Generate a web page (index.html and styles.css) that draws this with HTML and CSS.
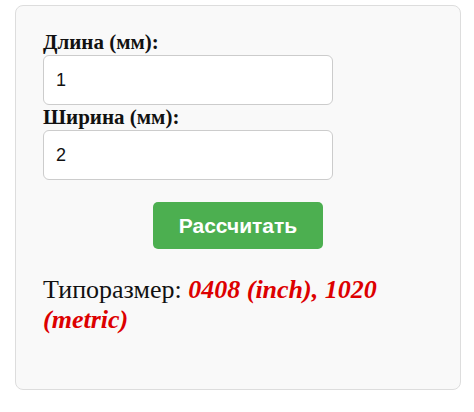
FILE: index.html
```html
<!DOCTYPE html>
<html lang="ru">
<head>
  <meta charset="UTF-8" />
  <meta name="viewport" content="width=device-width, initial-scale=1.0" />
  <title>Типоразмер</title>
  <link rel="stylesheet" href="styles.css">
</head>
<body>
<div class="card">
  <label for="len">Длина (мм):</label>
  <input type="number" id="len" value="1" />

  <label for="wid">Ширина (мм):</label>
  <input type="number" id="wid" value="2" />

  <div class="btn-row">
    <button class="calc-btn" id="calc-btn">Рассчитать</button>
  </div>

  <div class="result">Типоразмер: <span class="size">0408 (inch), 1020 (metric)</span></div>
</div>
</body>
</html>
```

FILE: styles.css
```css
* { box-sizing: border-box; }

body {
  margin: 0;
  background: #ffffff;
  font-family: "Liberation Serif", "Times New Roman", serif;
}

.card {
  margin: 5px 13px 0 15px;
  background: #f9f9f9;
  border: 1px solid #dddddd;
  border-radius: 8px;
  padding: 24px 27px 24px 27px;
  min-height: 385px;
}

label {
  display: block;
  font-size: 21px;
  font-weight: bold;
  line-height: 25px;
  color: #111111;
}

input[type="number"] {
  display: block;
  width: 290px;
  height: 50px;
  padding: 0 12px;
  font-family: "Liberation Sans", Arial, sans-serif;
  font-size: 18px;
  color: #111111;
  background: #ffffff;
  border: 1px solid #cccccc;
  border-radius: 6px;
  outline: none;
  margin: 0;
}
input[type="number"]::-webkit-inner-spin-button,
input[type="number"]::-webkit-outer-spin-button { -webkit-appearance: none; margin: 0; }

.btn-row {
  display: flex;
  justify-content: center;
  margin-top: 22px;
}

.calc-btn {
  width: 170px;
  height: 47px;
  font-family: "Liberation Sans", Arial, sans-serif;
  font-size: 21px;
  font-weight: bold;
  color: #ffffff;
  background: #4caf50;
  border: none;
  border-radius: 5px;
  cursor: pointer;
}

.result {
  margin-top: 26px;
  font-size: 26px;
  color: #111111;
}
.result .size {
  color: #dd0000;
  font-weight: bold;
  font-style: italic;
}
```
